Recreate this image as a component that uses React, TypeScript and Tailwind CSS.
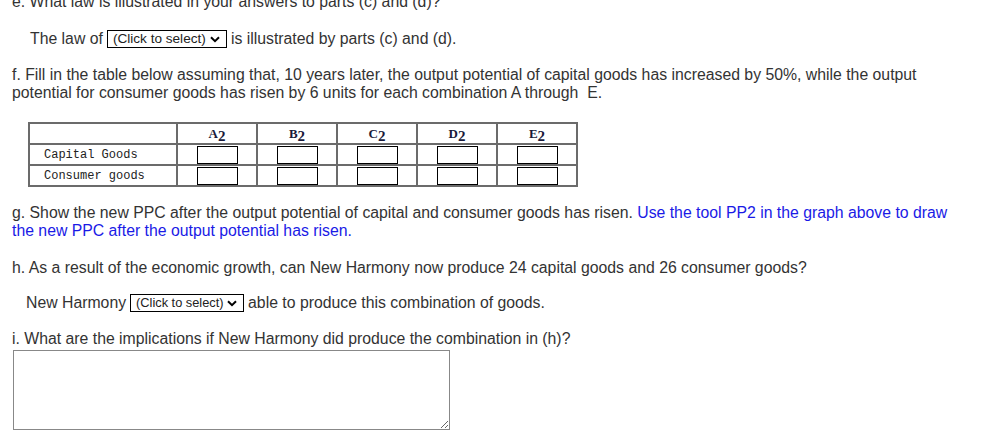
import React from 'react';

const Chevron = () => (
  <svg width="10" height="7" viewBox="0 0 10 7" className="ml-auto">
    <path d="M1 1.2 L5 5.2 L9 1.2" fill="none" stroke="#000" strokeWidth="2" />
  </svg>
);

const FakeSelect = ({ width, size }: { width: string; size: string }) => (
  <span
    className={`inline-flex items-center h-[18px] border border-black pl-[5px] pr-[6px] mx-[4px] text-[#222] font-['Liberation_Sans',sans-serif] ${width} ${size}`}
  >
    (Click to select)
    <Chevron />
  </span>
);

const cols = ['A', 'B', 'C', 'D', 'E'];

const Head = ({ l }: { l: string }) => (
  <div className="bg-white flex items-center justify-center font-['Liberation_Serif',serif] font-bold text-[#1a1a3a] leading-none">
    <span className="text-[13px]">{l}</span>
    <span className="text-[15px] translate-y-[3px]">2</span>
  </div>
);

const Box = () => (
  <div className="bg-white flex items-center justify-center">
    <input className="w-[41px] h-[18px] border border-black bg-white" />
  </div>
);

const App = () => {
  return (
    <div className="bg-white w-[990px] h-[438px] overflow-hidden font-['Liberation_Sans',sans-serif] text-[15.8px] leading-[18px] text-[#333]">
      <div className="-mt-[7px]">
        <p className="pl-[12px]">e. What law is illustrated in your answers to parts (c) and (d)?</p>

        <div className="pl-[30px] mt-[19px] flex items-center h-[18px]">
          <span>The law of</span>
          <FakeSelect width="w-[120px]" size="text-[13.6px]" />
          <span>is illustrated by parts (c) and (d).</span>
        </div>

        <p className="pl-[12px] mt-[18px] pr-[60px]">
          f. Fill in the table below assuming that, 10 years later, the output potential of capital goods has increased by 50%, while the output potential for consumer goods has risen by 6 units for each combination A through&nbsp; E.
        </p>

        {/* table */}
        <div className="ml-[28px] mt-[20px] w-[550px] grid grid-cols-[146px_78px_78px_78px_78px_78px] grid-rows-[19px_19px_19px] gap-[2px] p-[2px] bg-[#6b6b6b]">
          <div className="bg-white" />
          {cols.map((c) => (
            <Head key={c} l={c} />
          ))}
          <div className="bg-white flex items-center pl-[14px] font-['Liberation_Mono',monospace] text-[12px] text-[#222]">
            Capital Goods
          </div>
          {cols.map((c) => (
            <Box key={c} />
          ))}
          <div className="bg-white flex items-center pl-[14px] font-['Liberation_Mono',monospace] text-[12px] text-[#222]">
            Consumer goods
          </div>
          {cols.map((c) => (
            <Box key={c} />
          ))}
        </div>

        <p className="pl-[12px] mt-[17px] pr-[35px]">
          g. Show the new PPC after the output potential of capital and consumer goods has risen.{' '}
          <span className="text-[#1a1ae6]">Use the tool PP2 in the graph above to draw the new PPC after the output potential has risen.</span>
        </p>

        <p className="pl-[12px] mt-[19px]">
          h. As a result of the economic growth, can New Harmony now produce 24 capital goods and 26 consumer goods?
        </p>

        <div className="pl-[26px] mt-[17px] flex items-center h-[18px]">
          <span>New Harmony</span>
          <FakeSelect width="w-[114px]" size="text-[12.8px]" />
          <span>able to produce this combination of goods.</span>
        </div>

        <p className="pl-[12px] mt-[18px]">i. What are the implications if New Harmony did produce the combination in (h)?</p>

        <textarea className="block ml-[13px] mt-[2px] w-[437px] h-[80px] border border-[#888] bg-white" />
      </div>
    </div>
  );
};

export default App;
